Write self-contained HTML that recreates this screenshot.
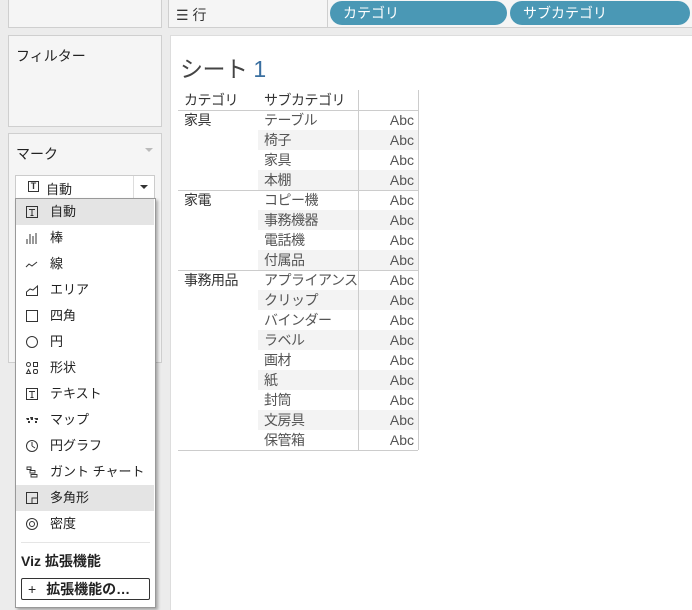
<!DOCTYPE html>
<html><head><meta charset="utf-8"><style>
*{margin:0;padding:0;box-sizing:border-box}
body{width:692px;height:610px;overflow:hidden;background:#ececec;font-family:"Liberation Sans","Noto Sans CJK JP",sans-serif;font-size:13px;color:#333;position:relative}
.abs{position:absolute}
.panel{position:absolute;background:#f5f5f5;border:1px solid #cfcfcf}
.pill{position:absolute;top:1px;height:24px;background:#4a98b5;border-radius:12px;color:#fff;font-size:14px;line-height:24px;padding-left:13px}
.t{position:absolute;font-size:14px;line-height:20px;white-space:nowrap;letter-spacing:-0.5px}
.sub{color:#555}
.stripe{position:absolute;left:258px;width:160px;height:20px;background:#f3f3f3}
.abc{position:absolute;left:358px;width:56px;text-align:right;font-size:14px;line-height:20px;color:#555}
.mi{position:absolute;left:16px;width:138px;height:26px;line-height:26px;font-size:13px;color:#222}
.mi .ic{position:absolute;left:9px;top:6px;width:14px;height:14px}
.mi span{position:absolute;left:34px}
.hl{background:#e4e4e4}
</style></head><body>
<div class="abs" style="left:8px;top:0;width:154px;height:28px;background:#f5f5f5;border:1px solid #cfcfcf;border-top:none"></div>
<div class="abs" style="left:168px;top:0;width:160px;height:28px;background:#f5f5f5;border:1px solid #cfcfcf;border-top:none"></div>
<div class="abs" style="left:328px;top:0;width:364px;height:28px;background:#f5f5f5;border-bottom:1px solid #cfcfcf"></div>
<div class="abs" style="left:176px;top:5px;font-size:14px;color:#333">☰ 行</div>
<div class="pill" style="left:330px;width:177px">カテゴリ</div>
<div class="pill" style="left:510px;width:180px">サブカテゴリ</div>
<div class="panel" style="left:8px;top:35px;width:154px;height:92px"></div>
<div class="abs" style="left:16px;top:46px;font-size:14px;color:#222">フィルター</div>
<div class="panel" style="left:8px;top:133px;width:154px;height:230px"></div>
<div class="abs" style="left:16px;top:144px;font-size:14px;color:#222">マーク</div>
<div class="abs" style="left:145px;top:148px;width:0;height:0;border-left:4px solid transparent;border-right:4px solid transparent;border-top:4px solid #bbb"></div>
<div class="abs" style="left:15px;top:175px;width:140px;height:24px;background:#fff;border:1px solid #ccc"></div>
<div class="abs" style="left:133px;top:176px;width:1px;height:22px;background:#ddd"></div>
<div class="abs" style="left:140px;top:185px;width:0;height:0;border-left:4px solid transparent;border-right:4px solid transparent;border-top:4px solid #333"></div>
<div class="abs" style="left:28px;top:181px;width:11px;height:11px;border:1px solid #333;font-size:9px;line-height:9px;text-align:center;font-weight:bold">T</div>
<div class="abs" style="left:46px;top:179px;font-size:13px;color:#222">自動</div>
<div class="abs" style="left:170px;top:35px;width:522px;height:575px;background:#fff;border-left:1px solid #ddd;border-top:1px solid #ddd"></div>
<div class="abs" style="left:180px;top:50px;font-size:23px;color:#444;letter-spacing:-0.5px">シート <span style="color:#3a6fa0">1</span></div>
<div class="t" style="left:184px;top:90px">カテゴリ</div>
<div class="t sub" style="left:264px;top:90px;color:#333">サブカテゴリ</div>
<div class="stripe" style="top:130px"></div><div class="stripe" style="top:170px"></div>
<div class="stripe" style="top:210px"></div><div class="stripe" style="top:250px"></div>
<div class="stripe" style="top:290px"></div><div class="stripe" style="top:330px"></div>
<div class="stripe" style="top:370px"></div><div class="stripe" style="top:410px"></div>
<div class="abs" style="left:178px;top:110px;width:240px;height:1px;background:#ccc"></div>
<div class="abs" style="left:178px;top:190px;width:240px;height:1px;background:#ccc"></div>
<div class="abs" style="left:178px;top:270px;width:240px;height:1px;background:#ccc"></div>
<div class="abs" style="left:178px;top:450px;width:240px;height:1px;background:#ccc"></div>
<div class="abs" style="left:358px;top:90px;width:1px;height:360px;background:#ccc"></div>
<div class="abs" style="left:418px;top:90px;width:1px;height:360px;background:#ccc"></div>
<div class="t" style="left:184px;top:110px">家具</div>
<div class="t" style="left:184px;top:190px">家電</div>
<div class="t" style="left:184px;top:270px">事務用品</div>
<div class="t sub" style="left:264px;top:110px">テーブル</div>
<div class="t sub" style="left:264px;top:130px">椅子</div>
<div class="t sub" style="left:264px;top:150px">家具</div>
<div class="t sub" style="left:264px;top:170px">本棚</div>
<div class="t sub" style="left:264px;top:190px">コピー機</div>
<div class="t sub" style="left:264px;top:210px">事務機器</div>
<div class="t sub" style="left:264px;top:230px">電話機</div>
<div class="t sub" style="left:264px;top:250px">付属品</div>
<div class="t sub" style="left:264px;top:270px">アプライアンス</div>
<div class="t sub" style="left:264px;top:290px">クリップ</div>
<div class="t sub" style="left:264px;top:310px">バインダー</div>
<div class="t sub" style="left:264px;top:330px">ラベル</div>
<div class="t sub" style="left:264px;top:350px">画材</div>
<div class="t sub" style="left:264px;top:370px">紙</div>
<div class="t sub" style="left:264px;top:390px">封筒</div>
<div class="t sub" style="left:264px;top:410px">文房具</div>
<div class="t sub" style="left:264px;top:430px">保管箱</div>
<div class="abc" style="top:110px">Abc</div><div class="abc" style="top:130px">Abc</div><div class="abc" style="top:150px">Abc</div><div class="abc" style="top:170px">Abc</div>
<div class="abc" style="top:190px">Abc</div><div class="abc" style="top:210px">Abc</div><div class="abc" style="top:230px">Abc</div><div class="abc" style="top:250px">Abc</div>
<div class="abc" style="top:270px">Abc</div><div class="abc" style="top:290px">Abc</div><div class="abc" style="top:310px">Abc</div><div class="abc" style="top:330px">Abc</div>
<div class="abc" style="top:350px">Abc</div><div class="abc" style="top:370px">Abc</div><div class="abc" style="top:390px">Abc</div><div class="abc" style="top:410px">Abc</div><div class="abc" style="top:430px">Abc</div>
<div class="abs" style="left:15px;top:198px;width:141px;height:410px;background:#fff;border:1px solid #999;box-shadow:2px 2px 3px rgba(0,0,0,.3)"></div>
<div class="mi hl" style="top:199px"><svg class="ic" viewBox="0 0 14 14"><rect x="1.5" y="1.5" width="11" height="11" fill="none" stroke="#333"/><path d="M4 4.5h6M7 4.5v6M5.5 10.5h3" stroke="#333" fill="none"/></svg><span>自動</span></div>
<div class="mi" style="top:225px"><svg class="ic" viewBox="0 0 14 14"><path d="M2 8v5M5 3v10M8 5v8M11 2v11" stroke="#333"/></svg><span>棒</span></div>
<div class="mi" style="top:251px"><svg class="ic" viewBox="0 0 14 14"><path d="M1 10l3-3 3 2 5-4" stroke="#333" fill="none"/></svg><span>線</span></div>
<div class="mi" style="top:277px"><svg class="ic" viewBox="0 0 14 14"><path d="M1.5 12.5h11V3L8 7 5 6 1.5 9z" stroke="#333" fill="none"/></svg><span>エリア</span></div>
<div class="mi" style="top:303px"><svg class="ic" viewBox="0 0 14 14"><rect x="1.5" y="1.5" width="11" height="11" fill="none" stroke="#333"/></svg><span>四角</span></div>
<div class="mi" style="top:329px"><svg class="ic" viewBox="0 0 14 14"><circle cx="7" cy="7" r="5.5" fill="none" stroke="#333"/></svg><span>円</span></div>
<div class="mi" style="top:355px"><svg class="ic" viewBox="0 0 14 14"><circle cx="3.5" cy="3.5" r="2" fill="none" stroke="#333"/><rect x="8.5" y="1.5" width="4" height="4" fill="none" stroke="#333"/><path d="M3.5 8.5l2 4h-4z" fill="none" stroke="#333"/><rect x="8.5" y="8.5" width="4" height="4" rx="1.5" fill="none" stroke="#333"/></svg><span>形状</span></div>
<div class="mi" style="top:381px"><svg class="ic" viewBox="0 0 14 14"><rect x="1.5" y="1.5" width="11" height="11" fill="none" stroke="#333"/><path d="M4 4.5h6M7 4.5v6M5.5 10.5h3" stroke="#333" fill="none"/></svg><span>テキスト</span></div>
<div class="mi" style="top:407px"><svg class="ic" viewBox="0 0 14 14"><path d="M1 5h3v2H2zM5 4h3v3H6zM9 5h4v2h-2zM3 8h2v2H3zM10 8h2v2h-2z" fill="#333"/></svg><span>マップ</span></div>
<div class="mi" style="top:433px"><svg class="ic" viewBox="0 0 14 14"><circle cx="7" cy="7" r="5.5" fill="none" stroke="#333"/><path d="M7 7V3M7 7l3 2" stroke="#333"/></svg><span>円グラフ</span></div>
<div class="mi" style="top:459px"><svg class="ic" viewBox="0 0 14 14"><path d="M2 2h4v2.5H2zM5 5.5h5V8H5zM6 9.5h6V12H6z" fill="none" stroke="#333" stroke-width=".9"/></svg><span>ガント チャート</span></div>
<div class="mi hl" style="top:485px"><svg class="ic" viewBox="0 0 14 14"><rect x="1.5" y="1.5" width="11" height="11" fill="none" stroke="#333"/><path d="M7 12.5V7h5.5" fill="none" stroke="#333"/></svg><span>多角形</span></div>
<div class="mi" style="top:511px"><svg class="ic" viewBox="0 0 14 14"><circle cx="7" cy="7" r="5.5" fill="none" stroke="#333"/><circle cx="7" cy="7" r="2.5" fill="none" stroke="#333"/></svg><span>密度</span></div>
<div class="abs" style="left:21px;top:542px;width:129px;height:1px;background:#e5e5e5"></div>
<div class="abs" style="left:21px;top:551px;font-size:14px;font-weight:bold;color:#222">Viz 拡張機能</div>
<div class="abs" style="left:21px;top:578px;width:129px;height:22px;border:1px solid #333;border-radius:2px;font-size:14px;font-weight:bold;line-height:20px;color:#222;white-space:nowrap;overflow:hidden"><span style="font-weight:normal;margin:0 10px 0 6px">+</span>拡張機能の…</div>
</body></html>
